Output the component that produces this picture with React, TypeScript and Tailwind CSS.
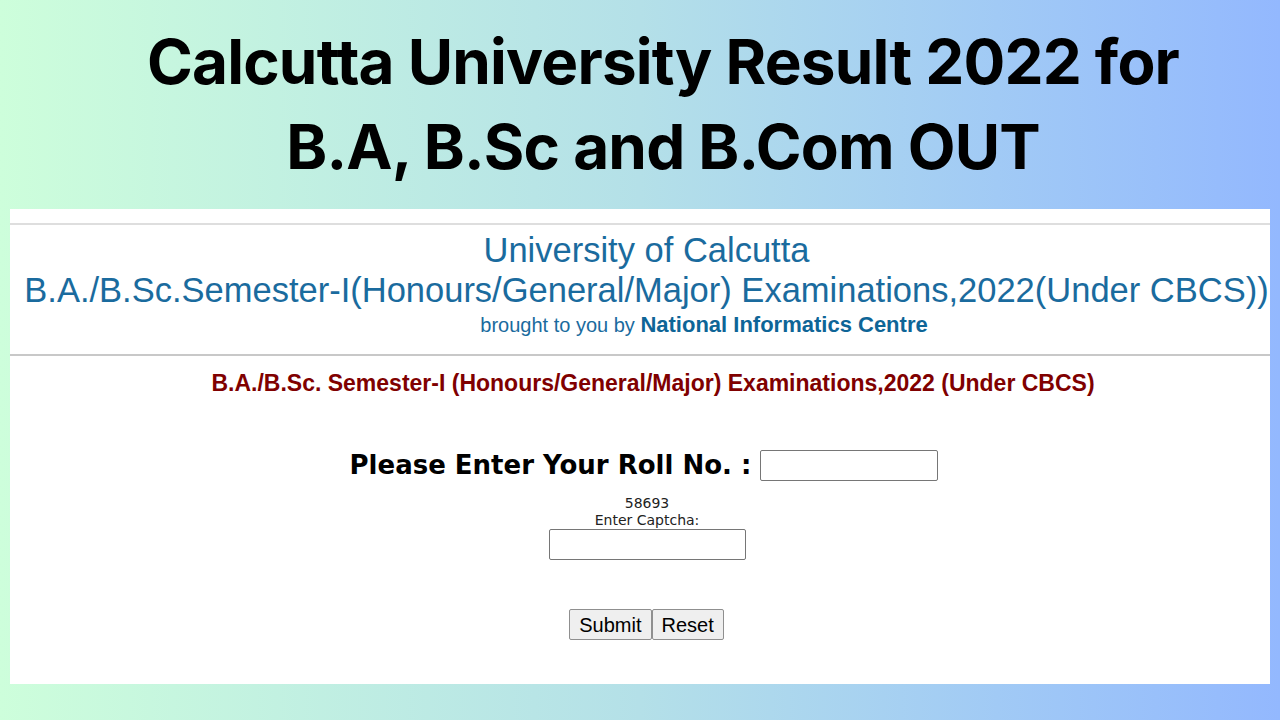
import React from "react";

export default function App() {
  return (
    <div className="w-[1280px] h-[720px] overflow-hidden bg-gradient-to-r from-[#cdfedb] via-[#b4e0e8] to-[#93b8fe] flex flex-col">
      <h1
        className="text-center text-black font-bold text-[62px] leading-[85px] pt-[19px] h-[209px] tracking-[-0.8px]"
        style={{ fontFamily: "Inter, 'Open Sans', sans-serif" }}
      >
        <div className="pl-[46px]">Calcutta University Result 2022 for</div>
        <div className="pl-[46px]">B.A, B.Sc and B.Com OUT</div>
      </h1>
      <div className="mx-[10px] h-[475px] bg-white flex flex-col overflow-hidden" style={{ fontFamily: "'Liberation Sans', Arial, sans-serif" }}>
        <div className="mt-[14px] h-[2px] bg-[#dedede]" />
        <div className="h-[129px] flex flex-col items-center text-[#1a6b9e] whitespace-nowrap">
          <div className="text-[34.5px] leading-[40px] mt-[5px] pl-[13px]">University of Calcutta</div>
          <div className="text-[34.5px] leading-[40px] pl-[13px]">B.A./B.Sc.Semester-I(Honours/General/Major) Examinations,2022(Under CBCS))</div>
          <div className="text-[20px] leading-[30px] pl-[128px]">
            brought to you by <span className="font-bold text-[22px] text-[#0e6597]">National Informatics Centre</span>
          </div>
        </div>
        <div className="h-[2px] bg-[#c8c8c8]" />
        <div className="mt-[12px] text-center text-[#800000] font-bold text-[23px] leading-[30px] pl-[26px]">
          B.A./B.Sc. Semester-I (Honours/General/Major) Examinations,2022 (Under CBCS)
        </div>
        <div className="mt-[48px] flex items-center justify-center pl-[8px]">
          <span className="font-bold text-[26px] text-black mr-[9px]" style={{ fontFamily: "'DejaVu Sans', Verdana, sans-serif" }}>
            Please Enter Your Roll No. :
          </span>
          <input className="w-[178px] h-[31px] border border-[#767676] rounded-[2px] outline-none" />
        </div>
        <div className="mt-[10px] flex flex-col items-center text-[14px] leading-[17px] text-[#222] pl-[14px]" style={{ fontFamily: "'DejaVu Sans', Verdana, sans-serif" }}>
          <div>58693</div>
          <div>Enter Captcha:</div>
        </div>
        <div className="flex justify-center pl-[14px]">
          <input className="w-[197px] h-[31px] border border-[#767676] rounded-[2px] outline-none" />
        </div>
        <div className="mt-[49px] flex justify-center pl-[13px]">
          <button className="h-[31px] px-[9px] bg-[#efefef] border border-[#8f8f8f] rounded-[2px] text-[20px] text-black leading-none">Submit</button>
          <button className="h-[31px] px-[9px] bg-[#efefef] border border-[#8f8f8f] rounded-[2px] text-[20px] text-black leading-none">Reset</button>
        </div>
      </div>
    </div>
  );
}
